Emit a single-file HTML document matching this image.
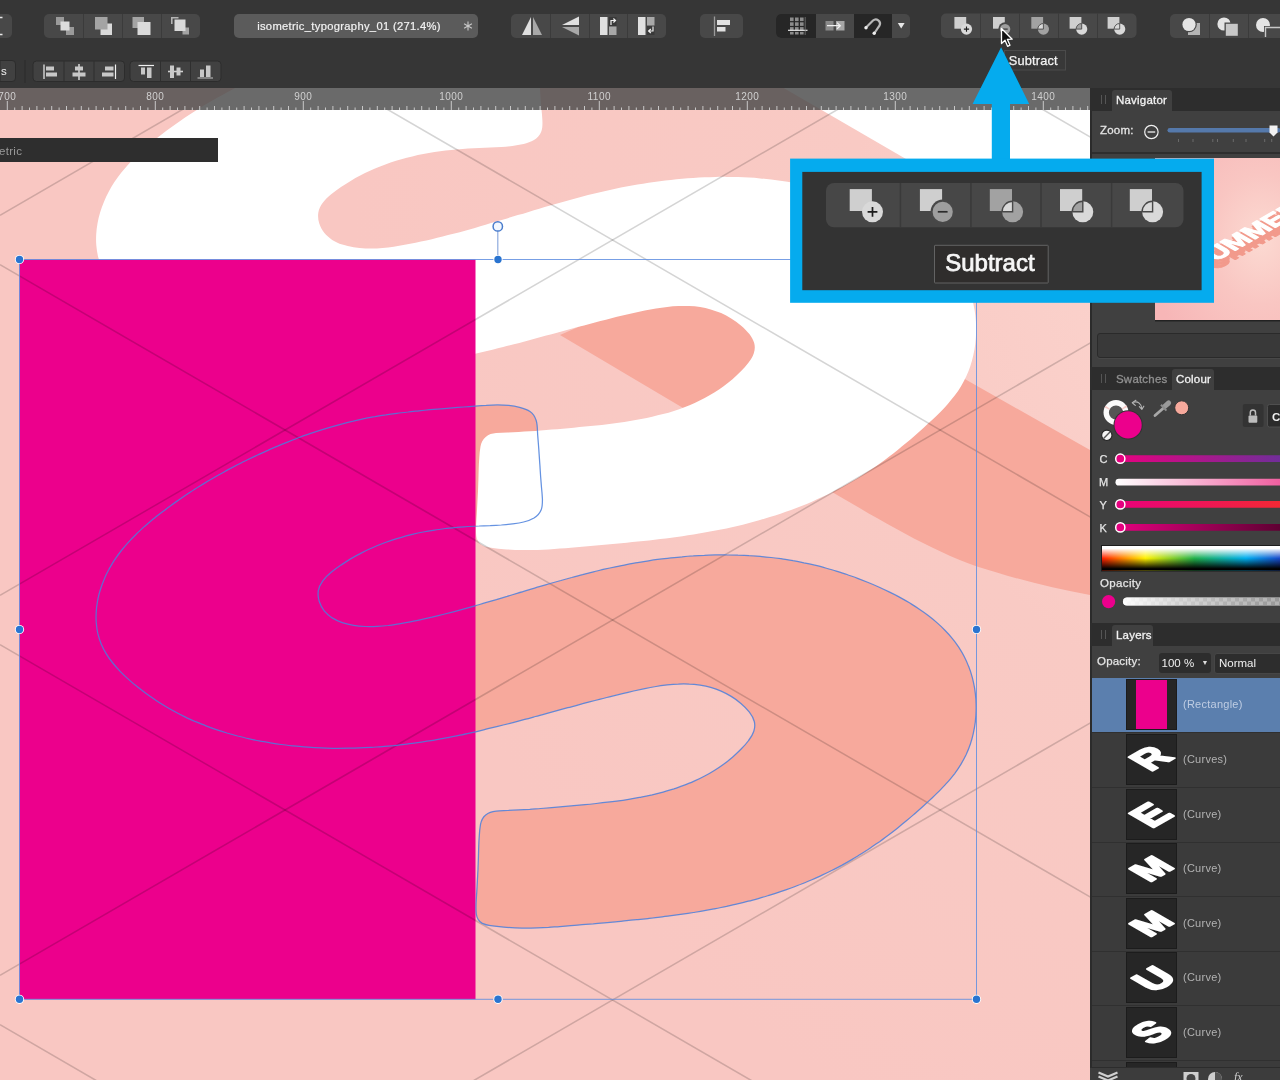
<!DOCTYPE html>
<html><head><meta charset="utf-8"><title>isometric_typography_01</title>
<style>
*{box-sizing:border-box;margin:0;padding:0}
html,body{width:1280px;height:1080px;overflow:hidden;background:#363636;font-family:"Liberation Sans",sans-serif;color:#ddd}
.abs{position:absolute}
body>*{will-change:transform}
#top{position:absolute;left:0;top:0;width:1280px;height:88px;background:#363636}
.canvas{position:absolute;left:0;top:87px}
.canvas text,.ruler text{font-family:"Liberation Sans",sans-serif}
#rulerwrap{position:absolute;left:0;top:88px;width:1090px;height:22px;background:rgba(76,76,76,.83)}
.ruler{position:absolute;left:0;top:0}
.grp{position:absolute;display:flex;border-radius:5px;overflow:hidden;background:#484848}
.grp>div{position:relative;height:100%;border-right:1px solid #3a3a3a}
.grp>div:last-child{border-right:0}
.grp svg{position:absolute;left:0;top:0}
#panel{position:absolute;left:1090px;top:88px;width:190px;height:992px;background:#404040}
.hdr{position:absolute;left:0;width:190px;height:25px;background:#2d2d2d}
.tab{position:absolute;top:0;height:25px;background:#404040;color:#f2f2f2;font-size:11.5px;line-height:25px;padding:0 4px;letter-spacing:.2px}
.grip{position:absolute;left:11px;top:8px;width:5px;height:9px;border-left:1px solid #555;border-right:1px solid #555}
.lbl{position:absolute;font-size:11.5px;color:#e4e4e4;letter-spacing:.2px}
.lrow{position:absolute;left:2px;width:188px;height:54.6px;border-top:1px solid #303030;background:#3b3b3b}
.lrow .th,.lrow .nm{margin-left:-2px}
.lrow .th{position:absolute;left:36px;top:.5px;width:51px;height:51px;background:#262626;border:1px solid #1c1c1c}
.lrow .nm{position:absolute;left:93px;top:19.5px;font-size:11px;color:#b2b2b2;letter-spacing:.25px}
.sl{position:absolute;left:36px;width:160px;height:7px;border-radius:4px;box-shadow:0 1px 0 rgba(255,255,255,.12)}
.knob{position:absolute;width:11px;height:11px;border-radius:50%;border:1.6px solid #fff;background:#e5007f;left:25px}
</style></head><body>

<svg class="canvas" width="1090" height="993" viewBox="0 87 1090 993">
<defs>
<path id="S" d="M474.8 406.1C471.1 406.4 467.3 406.7 463.6 407.0C459.8 407.3 456.1 407.6 452.3 407.9C448.6 408.2 444.9 408.5 441.2 408.8C437.5 409.1 433.8 409.4 430.1 409.7C426.4 410.1 422.7 410.4 419.0 410.8C415.3 411.2 411.6 411.5 408.0 412.0C404.3 412.4 400.6 412.8 397.0 413.3C393.3 413.8 389.7 414.3 386.0 414.9C382.4 415.4 378.7 416.0 375.1 416.7C371.4 417.3 367.8 418.0 364.2 418.7C360.5 419.5 356.9 420.2 353.3 421.1C349.6 421.9 346.0 422.8 342.4 423.8C338.7 424.7 335.1 425.7 331.5 426.8C327.9 427.9 324.3 429.0 320.7 430.1C317.1 431.3 313.5 432.5 309.9 433.7C306.4 434.9 302.8 436.2 299.2 437.5C295.7 438.8 292.2 440.2 288.7 441.6C285.1 443.0 281.6 444.4 278.2 445.9C274.7 447.3 271.2 448.8 267.8 450.4C264.4 451.9 261.0 453.4 257.6 455.0C254.2 456.6 250.8 458.2 247.5 459.8C244.1 461.4 240.8 463.1 237.5 464.8C234.3 466.5 231.0 468.2 227.7 469.9C224.5 471.7 221.3 473.4 218.1 475.3C214.9 477.1 211.7 478.9 208.5 480.8C205.4 482.7 202.2 484.6 199.1 486.5C195.9 488.5 192.8 490.5 189.7 492.5C186.6 494.5 183.5 496.6 180.5 498.7C177.4 500.9 174.3 503.0 171.3 505.2C168.2 507.4 165.2 509.7 162.2 512.0C159.2 514.3 156.2 516.6 153.2 519.0C150.3 521.5 147.4 523.9 144.5 526.4C141.7 529.0 138.9 531.6 136.2 534.2C133.4 536.9 130.8 539.6 128.3 542.4C125.8 545.2 123.3 548.1 121.0 551.0C118.7 554.0 116.5 557.0 114.4 560.1C112.4 563.3 110.4 566.5 108.7 569.8C106.9 573.1 105.3 576.4 103.9 579.9C102.4 583.4 101.2 586.9 100.1 590.5C99.0 594.1 98.1 597.7 97.5 601.4C96.8 605.0 96.4 608.7 96.2 612.4C96.0 616.0 96.0 619.7 96.3 623.3C96.6 626.9 97.1 630.4 97.9 633.9C98.8 637.4 99.9 640.8 101.3 644.2C102.7 647.5 104.4 650.7 106.3 653.9C108.2 657.0 110.4 660.1 112.8 663.0C115.1 666.0 117.7 668.8 120.4 671.6C123.1 674.4 125.9 677.0 128.8 679.6C131.7 682.2 134.6 684.7 137.7 687.1C140.7 689.5 143.7 691.8 146.8 694.1C149.9 696.3 153.0 698.5 156.1 700.5C159.3 702.6 162.5 704.6 165.7 706.5C168.9 708.4 172.2 710.3 175.5 712.0C178.8 713.8 182.1 715.5 185.5 717.1C188.8 718.7 192.2 720.2 195.6 721.7C199.0 723.1 202.4 724.5 205.9 725.8C209.3 727.1 212.8 728.4 216.3 729.6C219.8 730.8 223.3 731.9 226.9 733.0C230.4 734.0 234.0 735.0 237.6 736.0C241.2 736.9 244.8 737.8 248.4 738.6C252.0 739.4 255.6 740.2 259.3 740.9C262.9 741.6 266.6 742.2 270.3 742.8C273.9 743.4 277.6 744.0 281.3 744.5C285.0 745.0 288.7 745.4 292.4 745.8C296.2 746.2 299.9 746.6 303.6 746.9C307.3 747.2 311.1 747.4 314.8 747.6C318.5 747.8 322.3 748.0 326.0 748.1C329.8 748.2 333.5 748.3 337.3 748.3C341.0 748.3 344.8 748.3 348.6 748.2C352.3 748.2 356.1 748.1 359.8 747.9C363.6 747.8 367.3 747.6 371.1 747.4C374.8 747.1 378.6 746.9 382.3 746.6C386.1 746.3 389.8 745.9 393.6 745.6C397.3 745.2 401.0 744.8 404.7 744.3C408.5 743.9 412.2 743.4 415.9 742.9C419.6 742.3 423.3 741.8 427.0 741.2C430.7 740.6 434.3 740.0 438.0 739.3C441.7 738.7 445.3 738.0 449.0 737.3C452.6 736.6 456.2 735.9 459.9 735.1C463.5 734.4 467.1 733.6 470.7 732.8C474.4 732.0 478.0 731.2 481.6 730.3C485.2 729.5 488.8 728.6 492.4 727.7C496.0 726.8 499.6 725.9 503.2 725.0C506.7 724.1 510.3 723.2 513.9 722.3C517.5 721.3 521.1 720.4 524.7 719.4C528.3 718.5 531.8 717.5 535.4 716.5C539.0 715.6 542.6 714.6 546.2 713.6C549.8 712.6 553.4 711.7 557.0 710.7C560.6 709.7 564.2 708.7 567.8 707.7C571.4 706.8 575.0 705.8 578.6 704.8C582.2 703.9 585.9 702.9 589.5 701.9C593.1 701.0 596.8 700.0 600.4 699.1C604.1 698.2 607.8 697.2 611.4 696.3C615.1 695.4 618.8 694.5 622.5 693.6C626.2 692.7 629.9 691.9 633.6 691.0C637.3 690.2 641.0 689.4 644.8 688.6C648.5 687.8 652.2 687.1 656.0 686.5C659.7 685.9 663.4 685.4 667.2 684.9C670.9 684.5 674.6 684.2 678.3 684.1C682.0 683.9 685.6 683.9 689.3 684.1C692.9 684.2 696.5 684.6 700.1 685.1C703.7 685.7 707.2 686.4 710.7 687.4C714.2 688.4 717.7 689.6 721.1 691.1C724.5 692.6 727.9 694.3 731.2 696.4C734.5 698.4 737.8 700.8 740.9 703.4C744.1 706.1 747.0 709.0 749.4 712.1C751.7 715.1 753.5 718.3 754.3 721.5C755.1 724.8 754.9 728.0 753.8 731.2C752.8 734.4 750.9 737.5 748.6 740.5C746.4 743.6 743.7 746.5 740.9 749.3C738.2 752.0 735.4 754.7 732.5 757.2C729.6 759.6 726.7 762.0 723.6 764.2C720.6 766.4 717.5 768.5 714.3 770.5C711.2 772.5 708.0 774.3 704.7 776.0C701.4 777.8 698.1 779.4 694.7 780.9C691.3 782.4 687.9 783.9 684.4 785.2C681.0 786.5 677.4 787.7 673.9 788.9C670.3 790.0 666.8 791.1 663.1 792.1C659.5 793.0 655.9 793.9 652.2 794.8C648.6 795.6 644.9 796.4 641.2 797.1C637.4 797.8 633.7 798.5 630.0 799.1C626.2 799.7 622.5 800.3 618.7 800.8C615.0 801.3 611.2 801.8 607.5 802.2C603.7 802.7 600.0 803.1 596.2 803.5C592.5 803.9 588.7 804.3 585.0 804.6C581.3 805.0 577.6 805.3 573.9 805.7C570.2 806.0 566.5 806.4 562.8 806.7C559.2 807.0 555.5 807.3 551.8 807.6C548.2 807.9 544.5 808.2 540.8 808.5C537.2 808.8 533.5 809.0 529.8 809.3C526.1 809.5 522.4 809.7 518.7 809.9C515.0 810.2 511.2 810.4 507.5 810.5C503.7 810.7 499.9 810.8 496.1 811.1C492.3 811.4 488.6 812.5 485.7 814.9C482.7 817.3 481.2 820.7 480.5 824.4C479.9 828.1 479.5 831.9 479.3 835.6C479.0 839.4 478.8 843.1 478.7 846.8C478.6 850.5 478.5 854.2 478.4 858.0C478.3 861.7 478.1 865.4 478.0 869.2C477.8 872.9 477.6 876.7 477.4 880.4C477.2 884.1 477.0 887.8 476.8 891.6C476.5 895.3 476.3 899.0 476.1 902.7C476.0 906.4 475.8 910.3 476.3 914.0C476.8 917.7 478.8 921.2 481.9 923.1C485.0 924.9 488.9 925.4 492.7 925.9C496.4 926.4 500.2 926.9 503.9 927.2C507.7 927.5 511.4 927.7 515.1 927.9C518.9 928.0 522.6 928.1 526.3 928.1C530.0 928.1 533.8 928.0 537.5 927.9C541.2 927.7 544.9 927.6 548.6 927.4C552.3 927.1 556.0 926.9 559.8 926.6C563.5 926.3 567.2 926.0 570.9 925.7C574.6 925.4 578.3 925.1 582.0 924.7C585.8 924.4 589.5 924.1 593.2 923.8C596.9 923.4 600.6 923.1 604.4 922.8C608.1 922.5 611.8 922.1 615.5 921.8C619.3 921.4 623.0 921.1 626.7 920.7C630.4 920.4 634.1 920.0 637.9 919.6C641.6 919.2 645.3 918.8 649.0 918.4C652.7 918.0 656.4 917.6 660.2 917.1C663.9 916.7 667.6 916.2 671.3 915.7C675.0 915.2 678.7 914.7 682.4 914.2C686.1 913.6 689.8 913.1 693.5 912.5C697.1 911.9 700.8 911.3 704.5 910.6C708.2 910.0 711.8 909.3 715.5 908.6C719.2 907.9 722.8 907.1 726.5 906.4C730.1 905.6 733.7 904.8 737.4 903.9C741.0 903.1 744.6 902.2 748.2 901.2C751.9 900.3 755.5 899.3 759.1 898.3C762.7 897.3 766.2 896.2 769.8 895.1C773.4 894.0 776.9 892.9 780.5 891.7C784.0 890.5 787.6 889.2 791.1 888.0C794.6 886.7 798.1 885.3 801.5 884.0C805.0 882.6 808.5 881.2 811.9 879.7C815.3 878.2 818.7 876.7 822.1 875.1C825.5 873.5 828.8 871.9 832.2 870.2C835.5 868.6 838.8 866.8 842.1 865.1C845.4 863.3 848.6 861.5 851.8 859.6C855.0 857.7 858.2 855.8 861.4 853.8C864.5 851.8 867.6 849.8 870.7 847.7C873.8 845.7 876.8 843.5 879.9 841.4C882.9 839.2 885.9 837.0 888.9 834.7C891.8 832.5 894.8 830.2 897.7 827.9C900.6 825.5 903.5 823.2 906.4 820.8C909.3 818.4 912.2 815.9 915.0 813.5C917.8 811.0 920.6 808.5 923.4 806.0C926.2 803.4 929.0 800.9 931.8 798.3C934.5 795.7 937.2 793.1 939.9 790.4C942.5 787.7 945.1 785.0 947.6 782.2C950.1 779.4 952.4 776.5 954.7 773.6C956.9 770.6 959.0 767.5 960.9 764.4C962.8 761.2 964.6 757.9 966.2 754.6C967.7 751.2 969.1 747.7 970.3 744.2C971.5 740.6 972.5 737.0 973.3 733.3C974.1 729.6 974.8 725.9 975.3 722.1C975.7 718.3 976.0 714.5 976.1 710.8C976.2 707.0 976.1 703.2 975.9 699.4C975.6 695.6 975.2 691.8 974.6 688.1C973.9 684.4 973.2 680.7 972.2 677.1C971.2 673.5 970.1 670.0 968.7 666.6C967.4 663.1 965.9 659.8 964.2 656.5C962.6 653.3 960.7 650.2 958.7 647.1C956.7 644.1 954.5 641.2 952.2 638.4C949.9 635.5 947.5 632.8 944.9 630.2C942.4 627.6 939.7 625.0 936.9 622.6C934.1 620.1 931.2 617.8 928.2 615.5C925.3 613.2 922.2 611.0 919.0 608.9C915.9 606.8 912.6 604.8 909.4 602.8C906.1 600.8 902.7 598.9 899.4 597.1C896.0 595.3 892.5 593.6 889.1 591.9C885.6 590.2 882.2 588.6 878.7 587.0C875.2 585.4 871.7 583.9 868.2 582.5C864.7 581.1 861.2 579.7 857.6 578.3C854.1 577.0 850.6 575.8 847.0 574.5C843.5 573.3 839.9 572.2 836.3 571.1C832.8 570.0 829.2 569.0 825.6 568.0C822.0 567.0 818.4 566.1 814.8 565.2C811.2 564.3 807.6 563.5 803.9 562.8C800.3 562.0 796.7 561.3 793.0 560.7C789.4 560.0 785.8 559.5 782.1 558.9C778.4 558.4 774.8 557.9 771.1 557.5C767.4 557.1 763.7 556.7 760.1 556.4C756.4 556.1 752.7 555.8 749.0 555.6C745.3 555.3 741.6 555.2 737.9 555.1C734.2 554.9 730.4 554.9 726.7 554.9C723.0 554.8 719.3 554.9 715.6 554.9C711.9 555.0 708.1 555.1 704.4 555.3C700.7 555.4 697.0 555.6 693.2 555.9C689.5 556.1 685.8 556.4 682.1 556.8C678.3 557.1 674.6 557.5 670.9 557.9C667.2 558.3 663.5 558.7 659.8 559.2C656.0 559.7 652.3 560.2 648.6 560.8C644.9 561.4 641.2 562.0 637.5 562.6C633.8 563.2 630.1 563.9 626.4 564.6C622.8 565.3 619.1 566.1 615.4 566.8C611.7 567.6 608.1 568.4 604.4 569.2C600.8 570.1 597.1 570.9 593.5 571.8C589.8 572.7 586.2 573.6 582.6 574.6C578.9 575.5 575.3 576.5 571.7 577.5C568.1 578.4 564.5 579.4 560.9 580.5C557.3 581.5 553.7 582.5 550.1 583.5C546.5 584.6 542.9 585.6 539.3 586.7C535.7 587.8 532.1 588.8 528.6 589.9C525.0 591.0 521.4 592.1 517.8 593.1C514.2 594.2 510.7 595.3 507.1 596.4C503.5 597.4 499.9 598.5 496.4 599.6C492.8 600.6 489.2 601.7 485.6 602.7C482.1 603.8 478.5 604.8 474.9 605.9C471.3 606.9 467.8 607.9 464.2 608.9C460.6 609.9 457.0 610.8 453.4 611.8C449.8 612.7 446.2 613.6 442.7 614.5C439.1 615.4 435.5 616.3 431.9 617.2C428.2 618.0 424.6 618.8 421.0 619.6C417.4 620.4 413.8 621.1 410.2 621.8C406.5 622.5 402.9 623.2 399.2 623.8C395.6 624.5 391.9 625.0 388.2 625.5C384.5 625.9 380.8 626.2 377.0 626.4C373.2 626.6 369.3 626.7 365.4 626.5C361.5 626.3 357.5 626.0 353.6 625.3C349.7 624.7 345.9 623.8 342.2 622.6C338.6 621.4 335.2 619.8 332.2 617.9C329.2 615.9 326.5 613.6 324.2 610.8C322.0 608.0 320.3 604.8 319.2 601.3C318.1 597.8 317.8 594.2 318.3 590.7C318.9 587.2 320.5 583.9 322.8 580.8C325.1 577.8 328.0 574.9 331.2 572.3C334.4 569.7 337.8 567.3 341.0 565.1C344.3 562.9 347.4 560.8 350.6 558.9C353.8 557.0 357.0 555.2 360.2 553.6C363.4 551.9 366.6 550.3 370.0 548.8C373.3 547.3 376.7 545.9 380.1 544.5C383.6 543.1 387.1 541.8 390.6 540.6C394.2 539.4 397.8 538.3 401.4 537.3C405.0 536.2 408.6 535.3 412.3 534.4C416.0 533.5 419.6 532.7 423.3 532.0C427.0 531.3 430.7 530.7 434.5 530.1C438.2 529.5 441.9 529.0 445.6 528.5C449.4 528.1 453.1 527.7 456.8 527.4C460.6 527.0 464.3 526.8 468.0 526.5C471.7 526.3 475.5 526.1 479.2 526.0C482.9 525.8 486.5 525.7 490.2 525.6C493.9 525.4 497.6 525.2 501.3 525.0C505.0 524.7 508.7 524.4 512.4 523.9C516.1 523.4 519.9 522.9 523.6 522.0C527.3 521.1 530.9 519.9 534.0 518.0C537.1 516.0 539.9 513.1 541.2 509.7C542.6 506.3 542.5 502.4 542.4 498.6C542.2 494.9 541.9 491.2 541.5 487.5C541.2 483.8 540.9 480.0 540.6 476.3C540.4 472.6 540.1 468.9 539.9 465.1C539.6 461.4 539.4 457.7 539.1 453.9C538.9 450.2 538.6 446.5 538.3 442.8C538.0 439.1 537.7 435.4 537.5 431.6C537.4 427.9 537.3 424.1 536.2 420.5C535.1 416.9 533.0 413.4 530.0 411.4C526.9 409.4 523.2 408.3 519.6 407.3C516.0 406.4 512.4 405.8 508.7 405.4C505.0 405.0 501.2 404.9 497.5 404.9C493.7 404.9 490.0 405.0 486.2 405.3C482.4 405.5 478.6 405.8 474.8 406.1Z"/>
<radialGradient id="bgG" gradientUnits="userSpaceOnUse" cx="1350" cy="230" r="1000"><stop offset="0" stop-color="#fcd8d2"/><stop offset=".5" stop-color="#f9cac4"/><stop offset="1" stop-color="#f9c7c2"/></radialGradient>
</defs>
<rect x="0" y="80" width="1090" height="1000" fill="url(#bgG)"/>
<path d="M963 378 L1090 450 L1090 595 C1050 588 1010 577 977 566.5 C930 550 880 520 832 492 L900 420Z" fill="#f7a99c"/>
<path d="M560 335 L640 300 L780 300 L780 380 L700 418Z" fill="#f7a99c"/>
<path d="M782 87 L1090 87 L1090 160 L907.700 160Z" fill="#fff"/>
<use href="#S" fill="#f7a99c"/>
<use href="#S" fill="#fff" transform="translate(0,-378)"/>
<rect x="19.5" y="259.5" width="456" height="739.8" fill="#ec008c"/>
<clipPath id="cv"><rect x="0" y="110" width="1090" height="970"/></clipPath><g stroke="#000" stroke-opacity=".17" stroke-width="1.6" clip-path="url(#cv)"><line x1="0.0" y1="-495.3" x2="1100.0" y2="142.7"/><line x1="0.0" y1="-115.3" x2="1100.0" y2="522.7"/><line x1="0.0" y1="264.7" x2="1100.0" y2="902.7"/><line x1="0.0" y1="644.7" x2="1100.0" y2="1282.7"/><line x1="0.0" y1="1024.7" x2="1100.0" y2="1662.7"/><line x1="0.0" y1="1404.7" x2="1100.0" y2="2042.7"/><line x1="0.0" y1="215.3" x2="1100.0" y2="-422.7"/><line x1="0.0" y1="595.3" x2="1100.0" y2="-42.7"/><line x1="0.0" y1="975.3" x2="1100.0" y2="337.3"/><line x1="0.0" y1="1355.3" x2="1100.0" y2="717.3"/><line x1="0.0" y1="1735.3" x2="1100.0" y2="1097.3"/><line x1="0.0" y1="2115.3" x2="1100.0" y2="1477.3"/></g>
<use href="#S" fill="none" stroke="#4a7fdc" stroke-width="1.25" stroke-opacity=".85"/>
<rect x="19.5" y="259.5" width="957" height="739.8" fill="none" stroke="#5f8ee0" stroke-opacity=".85" stroke-width="1"/>
<line x1="497.8" y1="231" x2="497.8" y2="259" stroke="#8eaade" stroke-width="1.2"/>
<circle cx="497.8" cy="226.4" r="4.7" fill="#f2f8ff" stroke="#4a7ccc" stroke-width="1.5"/>
<circle cx="19.5" cy="259.5" r="4.6" fill="#fff"/><circle cx="19.5" cy="259.5" r="3.7" fill="#2a74d0"/><circle cx="498.0" cy="259.5" r="4.6" fill="#fff"/><circle cx="498.0" cy="259.5" r="3.7" fill="#2a74d0"/><circle cx="19.5" cy="629.5" r="4.6" fill="#fff"/><circle cx="19.5" cy="629.5" r="3.7" fill="#2a74d0"/><circle cx="976.5" cy="629.5" r="4.6" fill="#fff"/><circle cx="976.5" cy="629.5" r="3.7" fill="#2a74d0"/><circle cx="19.5" cy="999.3" r="4.6" fill="#fff"/><circle cx="19.5" cy="999.3" r="3.7" fill="#2a74d0"/><circle cx="498.0" cy="999.3" r="4.6" fill="#fff"/><circle cx="498.0" cy="999.3" r="3.7" fill="#2a74d0"/><circle cx="976.5" cy="999.3" r="4.6" fill="#fff"/><circle cx="976.5" cy="999.3" r="3.7" fill="#2a74d0"/>
<rect x="0" y="138" width="218" height="24" fill="#2e2e2e"/>
<text x="-1" y="154.5" font-size="11.5" fill="#9a9a9a" letter-spacing=".3">etric</text>
</svg>

<div id="rulerwrap"><svg class="ruler" width="1090" height="22" viewBox="0 0 1090 22"><g fill="#d8d8d8" opacity=".85"><rect x="6.8" y="13.0" width="1" height="9.0"/><rect x="14.2" y="19.5" width="1" height="2.5"/><rect x="21.6" y="18.0" width="1" height="4.0"/><rect x="29.0" y="19.5" width="1" height="2.5"/><rect x="36.4" y="18.0" width="1" height="4.0"/><rect x="43.8" y="19.5" width="1" height="2.5"/><rect x="51.2" y="18.0" width="1" height="4.0"/><rect x="58.6" y="19.5" width="1" height="2.5"/><rect x="66.0" y="18.0" width="1" height="4.0"/><rect x="73.4" y="19.5" width="1" height="2.5"/><rect x="80.8" y="18.0" width="1" height="4.0"/><rect x="88.2" y="19.5" width="1" height="2.5"/><rect x="95.6" y="18.0" width="1" height="4.0"/><rect x="103.0" y="19.5" width="1" height="2.5"/><rect x="110.4" y="18.0" width="1" height="4.0"/><rect x="117.8" y="19.5" width="1" height="2.5"/><rect x="125.2" y="18.0" width="1" height="4.0"/><rect x="132.6" y="19.5" width="1" height="2.5"/><rect x="140.0" y="18.0" width="1" height="4.0"/><rect x="147.4" y="19.5" width="1" height="2.5"/><rect x="154.8" y="13.0" width="1" height="9.0"/><rect x="162.2" y="19.5" width="1" height="2.5"/><rect x="169.6" y="18.0" width="1" height="4.0"/><rect x="177.0" y="19.5" width="1" height="2.5"/><rect x="184.4" y="18.0" width="1" height="4.0"/><rect x="191.8" y="19.5" width="1" height="2.5"/><rect x="199.2" y="18.0" width="1" height="4.0"/><rect x="206.6" y="19.5" width="1" height="2.5"/><rect x="214.0" y="18.0" width="1" height="4.0"/><rect x="221.4" y="19.5" width="1" height="2.5"/><rect x="228.8" y="18.0" width="1" height="4.0"/><rect x="236.2" y="19.5" width="1" height="2.5"/><rect x="243.6" y="18.0" width="1" height="4.0"/><rect x="251.0" y="19.5" width="1" height="2.5"/><rect x="258.4" y="18.0" width="1" height="4.0"/><rect x="265.8" y="19.5" width="1" height="2.5"/><rect x="273.2" y="18.0" width="1" height="4.0"/><rect x="280.6" y="19.5" width="1" height="2.5"/><rect x="288.0" y="18.0" width="1" height="4.0"/><rect x="295.4" y="19.5" width="1" height="2.5"/><rect x="302.8" y="13.0" width="1" height="9.0"/><rect x="310.2" y="19.5" width="1" height="2.5"/><rect x="317.6" y="18.0" width="1" height="4.0"/><rect x="325.0" y="19.5" width="1" height="2.5"/><rect x="332.4" y="18.0" width="1" height="4.0"/><rect x="339.8" y="19.5" width="1" height="2.5"/><rect x="347.2" y="18.0" width="1" height="4.0"/><rect x="354.6" y="19.5" width="1" height="2.5"/><rect x="362.0" y="18.0" width="1" height="4.0"/><rect x="369.4" y="19.5" width="1" height="2.5"/><rect x="376.8" y="18.0" width="1" height="4.0"/><rect x="384.2" y="19.5" width="1" height="2.5"/><rect x="391.6" y="18.0" width="1" height="4.0"/><rect x="399.0" y="19.5" width="1" height="2.5"/><rect x="406.4" y="18.0" width="1" height="4.0"/><rect x="413.8" y="19.5" width="1" height="2.5"/><rect x="421.2" y="18.0" width="1" height="4.0"/><rect x="428.6" y="19.5" width="1" height="2.5"/><rect x="436.0" y="18.0" width="1" height="4.0"/><rect x="443.4" y="19.5" width="1" height="2.5"/><rect x="450.8" y="13.0" width="1" height="9.0"/><rect x="458.2" y="19.5" width="1" height="2.5"/><rect x="465.6" y="18.0" width="1" height="4.0"/><rect x="473.0" y="19.5" width="1" height="2.5"/><rect x="480.4" y="18.0" width="1" height="4.0"/><rect x="487.8" y="19.5" width="1" height="2.5"/><rect x="495.2" y="18.0" width="1" height="4.0"/><rect x="502.6" y="19.5" width="1" height="2.5"/><rect x="510.0" y="18.0" width="1" height="4.0"/><rect x="517.4" y="19.5" width="1" height="2.5"/><rect x="524.8" y="18.0" width="1" height="4.0"/><rect x="532.2" y="19.5" width="1" height="2.5"/><rect x="539.6" y="18.0" width="1" height="4.0"/><rect x="547.0" y="19.5" width="1" height="2.5"/><rect x="554.4" y="18.0" width="1" height="4.0"/><rect x="561.8" y="19.5" width="1" height="2.5"/><rect x="569.2" y="18.0" width="1" height="4.0"/><rect x="576.6" y="19.5" width="1" height="2.5"/><rect x="584.0" y="18.0" width="1" height="4.0"/><rect x="591.4" y="19.5" width="1" height="2.5"/><rect x="598.8" y="13.0" width="1" height="9.0"/><rect x="606.2" y="19.5" width="1" height="2.5"/><rect x="613.6" y="18.0" width="1" height="4.0"/><rect x="621.0" y="19.5" width="1" height="2.5"/><rect x="628.4" y="18.0" width="1" height="4.0"/><rect x="635.8" y="19.5" width="1" height="2.5"/><rect x="643.2" y="18.0" width="1" height="4.0"/><rect x="650.6" y="19.5" width="1" height="2.5"/><rect x="658.0" y="18.0" width="1" height="4.0"/><rect x="665.4" y="19.5" width="1" height="2.5"/><rect x="672.8" y="18.0" width="1" height="4.0"/><rect x="680.2" y="19.5" width="1" height="2.5"/><rect x="687.6" y="18.0" width="1" height="4.0"/><rect x="695.0" y="19.5" width="1" height="2.5"/><rect x="702.4" y="18.0" width="1" height="4.0"/><rect x="709.8" y="19.5" width="1" height="2.5"/><rect x="717.2" y="18.0" width="1" height="4.0"/><rect x="724.6" y="19.5" width="1" height="2.5"/><rect x="732.0" y="18.0" width="1" height="4.0"/><rect x="739.4" y="19.5" width="1" height="2.5"/><rect x="746.8" y="13.0" width="1" height="9.0"/><rect x="754.2" y="19.5" width="1" height="2.5"/><rect x="761.6" y="18.0" width="1" height="4.0"/><rect x="769.0" y="19.5" width="1" height="2.5"/><rect x="776.4" y="18.0" width="1" height="4.0"/><rect x="783.8" y="19.5" width="1" height="2.5"/><rect x="791.2" y="18.0" width="1" height="4.0"/><rect x="798.6" y="19.5" width="1" height="2.5"/><rect x="806.0" y="18.0" width="1" height="4.0"/><rect x="813.4" y="19.5" width="1" height="2.5"/><rect x="820.8" y="18.0" width="1" height="4.0"/><rect x="828.2" y="19.5" width="1" height="2.5"/><rect x="835.6" y="18.0" width="1" height="4.0"/><rect x="843.0" y="19.5" width="1" height="2.5"/><rect x="850.4" y="18.0" width="1" height="4.0"/><rect x="857.8" y="19.5" width="1" height="2.5"/><rect x="865.2" y="18.0" width="1" height="4.0"/><rect x="872.6" y="19.5" width="1" height="2.5"/><rect x="880.0" y="18.0" width="1" height="4.0"/><rect x="887.4" y="19.5" width="1" height="2.5"/><rect x="894.8" y="13.0" width="1" height="9.0"/><rect x="902.2" y="19.5" width="1" height="2.5"/><rect x="909.6" y="18.0" width="1" height="4.0"/><rect x="917.0" y="19.5" width="1" height="2.5"/><rect x="924.4" y="18.0" width="1" height="4.0"/><rect x="931.8" y="19.5" width="1" height="2.5"/><rect x="939.2" y="18.0" width="1" height="4.0"/><rect x="946.6" y="19.5" width="1" height="2.5"/><rect x="954.0" y="18.0" width="1" height="4.0"/><rect x="961.4" y="19.5" width="1" height="2.5"/><rect x="968.8" y="18.0" width="1" height="4.0"/><rect x="976.2" y="19.5" width="1" height="2.5"/><rect x="983.6" y="18.0" width="1" height="4.0"/><rect x="991.0" y="19.5" width="1" height="2.5"/><rect x="998.4" y="18.0" width="1" height="4.0"/><rect x="1005.8" y="19.5" width="1" height="2.5"/><rect x="1013.2" y="18.0" width="1" height="4.0"/><rect x="1020.6" y="19.5" width="1" height="2.5"/><rect x="1028.0" y="18.0" width="1" height="4.0"/><rect x="1035.4" y="19.5" width="1" height="2.5"/><rect x="1042.8" y="13.0" width="1" height="9.0"/><rect x="1050.2" y="19.5" width="1" height="2.5"/><rect x="1057.6" y="18.0" width="1" height="4.0"/><rect x="1065.0" y="19.5" width="1" height="2.5"/><rect x="1072.4" y="18.0" width="1" height="4.0"/><rect x="1079.8" y="19.5" width="1" height="2.5"/><rect x="1087.2" y="18.0" width="1" height="4.0"/></g><g fill="#d0d0d0" font-size="10" text-anchor="middle" letter-spacing=".5"><text x="-140.7" y="12">600</text><text x="7.3" y="12">700</text><text x="155.3" y="12">800</text><text x="303.3" y="12">900</text><text x="451.3" y="12">1000</text><text x="599.3" y="12">1100</text><text x="747.3" y="12">1200</text><text x="895.3" y="12">1300</text><text x="1043.3" y="12">1400</text><text x="1191.3" y="12">1500</text></g></svg></div>
<div id="top">
<svg class="abs" style="left:0;top:0" width="1280" height="88" viewBox="0 0 1280 88">
<defs>
<clipPath id="cg1"><rect x="44" y="14" width="156" height="24" rx="5"/></clipPath>
</defs>
<!-- left partial -->
<path d="M0 14H7a5 5 0 0 1 5 5V33a5 5 0 0 1-5 5H0Z" fill="#484848"/>
<path d="M0 17.5H2.5M0 34.5H2.5" stroke="#e8e8e8" stroke-width="1.6" fill="none"/>
<!-- group1 arrange -->
<rect x="44" y="14" width="156" height="24" rx="5" fill="#484848"/>
<g stroke="#3b3b3b" stroke-width="1"><path d="M83.5 14V38M122.5 14V38M161.5 14V38"/></g>
<g>
<rect x="56" y="17" width="8" height="8" fill="#9a9a9a"/><rect x="66" y="27" width="8" height="8" fill="#9a9a9a"/><rect x="60.5" y="21.5" width="9" height="9" fill="#dcdcdc"/>
<rect x="100.5" y="23.5" width="11.5" height="11.5" fill="#dadada"/><rect x="95" y="17" width="12.5" height="12.5" fill="#a4a4a4"/>
<rect x="132.5" y="17" width="11.5" height="11" fill="#a4a4a4"/><rect x="137.5" y="22" width="13" height="13" fill="#dadada"/>
<path d="M171.800 24V17.800H178.500" stroke="#b4b4b4" stroke-width="1.600" fill="none"/><rect x="182.500" y="27.500" width="6.500" height="7" fill="#a4a4a4"/><rect x="174.500" y="19.500" width="11" height="11.500" fill="#dadada"/>
</g>
<!-- title pill -->
<rect x="234" y="14" width="244" height="24" rx="5" fill="#5b5b5b"/>
<text x="349" y="30" font-size="11.2" fill="#f2f2f2" stroke="#f2f2f2" stroke-width=".2" text-anchor="middle" letter-spacing=".32" font-family="Liberation Sans, sans-serif">isometric_typography_01 (271.4%)</text>
<path d="M468 21.5V30.5M464.1 23.8L471.9 28.2M464.1 28.2L471.9 23.8" stroke="#c8c8c8" stroke-width="1.1"/>
<!-- group2 flip/rotate -->
<rect x="511" y="14" width="155" height="24" rx="5" fill="#484848"/>
<g stroke="#3b3b3b" stroke-width="1"><path d="M550.5 14V38M589.5 14V38M627.5 14V38"/></g>
<path d="M531 17L531 35L522 35Z" fill="#e0e0e0"/><path d="M533 17L533 35L542 35Z" fill="#a8a8a8"/>
<path d="M579 16.5L579 25L562 25Z" fill="#e0e0e0"/><path d="M579 27L579 35.5L562 27Z" fill="#a8a8a8"/>
<rect x="600" y="17" width="7.5" height="18" fill="#e0e0e0"/><rect x="609" y="26.5" width="7.5" height="8.5" fill="#a8a8a8"/><rect x="609" y="17" width="7.5" height="9" fill="#393939"/><path d="M611 25V20.5H615M613.4 18.5L615.5 20.5L613.4 22.5" stroke="#f0f0f0" stroke-width="1.2" fill="none"/>
<rect x="638" y="17" width="7.5" height="18" fill="#e0e0e0"/><rect x="647" y="17" width="7.5" height="8.5" fill="#a8a8a8"/><rect x="647" y="26" width="7.5" height="9" fill="#393939"/><path d="M653 26.500V31H649M650.800 29L648.600 31L650.800 33" stroke="#f0f0f0" stroke-width="1.2" fill="none"/>
<!-- group3 -->
<rect x="700" y="14" width="43" height="24" rx="5" fill="#484848"/>
<path d="M714.5 16.5V36" stroke="#9a9a9a" stroke-width="1.3"/><rect x="717" y="20" width="13" height="5" fill="#e0e0e0"/><rect x="717" y="27" width="8.5" height="4.5" fill="#e0e0e0"/>
<!-- group4 snapping -->
<rect x="776" y="14" width="134" height="24" rx="5" fill="#484848"/>
<path d="M781 14H816V38H781a5 5 0 0 1-5-5V19a5 5 0 0 1 5-5Z" fill="#262626"/>
<rect x="854" y="14" width="38" height="24" fill="#262626"/>
<g fill="#8c8c8c"><rect x="790" y="17.5" width="3.6" height="3.6"/><rect x="795" y="17.5" width="3.6" height="3.6"/><rect x="800" y="17.5" width="3.6" height="3.6"/><rect x="790" y="22.3" width="3.6" height="3.6"/><rect x="795" y="22.3" width="3.6" height="3.6"/><rect x="800" y="22.3" width="3.6" height="3.6"/><rect x="790" y="27.1" width="3.6" height="3.6"/><rect x="795" y="27.1" width="3.6" height="3.6"/><rect x="800" y="27.1" width="3.6" height="3.6"/><rect x="790" y="31.9" width="3.6" height="2.6"/><rect x="795" y="31.9" width="3.6" height="2.6"/><rect x="800" y="31.9" width="3.6" height="2.6"/></g>
<path d="M788 30.3H807.5" stroke="#e6e6e6" stroke-width="1.2"/><path d="M805.2 17V35" stroke="#777" stroke-width=".8"/>
<rect x="825.5" y="21" width="8" height="9.5" fill="#8a8a8a"/><rect x="836" y="21" width="8.5" height="9.5" fill="#a6a6a6"/><path d="M827 25.7H840M837 22.6L840.4 25.7L837 28.8" stroke="#f0f0f0" stroke-width="1.2" fill="none"/>
<path d="M866 27.5L873 20.5a4.2 4.2 0 0 1 6.6 4.9L874.5 33" stroke="#b8b8b8" stroke-width="2.2" fill="none" stroke-linecap="round"/><circle cx="866" cy="27.8" r="1.7" fill="#eee"/><circle cx="874.2" cy="33.3" r="1.7" fill="#eee"/>
<path d="M897.8 23L904.6 23L901.2 28.6Z" fill="#e8e8e8"/>
<!-- group5 boolean -->
<rect x="941" y="13.5" width="195.5" height="24.5" rx="5" fill="#484848"/>
<g stroke="#3b3b3b" stroke-width="1"><path d="M980.5 13.5V38M1019.5 13.5V38M1058.5 13.5V38M1097.5 13.5V38"/></g>
<rect x="954.4" y="17" width="11.8" height="11.7" fill="#cfcfcf"/><circle cx="966.4999999999999" cy="29.099999999999998" r="5.6" fill="#d9d9d9"/><path d="M963.9 29.099999999999998H969.1M966.4999999999999 26.5V31.7" stroke="#1c1c1c" stroke-width="1.1"/><rect x="993" y="17" width="11.8" height="11.7" fill="#cfcfcf"/><circle cx="1005.0999999999999" cy="29.099999999999998" r="6.8" fill="#484848"/><circle cx="1005.0999999999999" cy="29.099999999999998" r="5.2" fill="#9e9e9e"/><path d="M1002.5 29.099999999999998H1007.7" stroke="#2c2c2c" stroke-width="1.1"/><rect x="1031.3" y="17" width="11.8" height="11.7" fill="#a2a2a2"/><circle cx="1043.3999999999999" cy="29.099999999999998" r="5.6" fill="#a2a2a2"/><path d="M1037.8 29.099999999999998A5.6 5.6 0 0 1 1043.3999999999999 23.5V29.099999999999998Z" fill="#d9d9d9" stroke="#484848" stroke-width="0.9" stroke-linejoin="miter"/><rect x="1069.6" y="17" width="11.8" height="11.7" fill="#cfcfcf"/><circle cx="1081.6999999999998" cy="29.099999999999998" r="5.6" fill="#d9d9d9"/><path d="M1076.1 29.099999999999998A5.6 5.6 0 0 1 1081.6999999999998 23.5V29.099999999999998Z" fill="#a2a2a2" stroke="#484848" stroke-width="0.9" stroke-linejoin="miter"/><rect x="1107.6" y="17" width="11.8" height="11.7" fill="#cfcfcf"/><circle cx="1119.6999999999998" cy="29.099999999999998" r="5.6" fill="#d9d9d9"/><path d="M1114.1 29.099999999999998A5.6 5.6 0 0 1 1119.6999999999998 23.5V29.099999999999998Z" fill="#d9d9d9" stroke="#484848" stroke-width="0.9" stroke-linejoin="miter"/>
<!-- group6 -->
<path d="M1175 14H1280V38H1175a5 5 0 0 1-5-5V19a5 5 0 0 1 5-5Z" fill="#484848"/>
<g stroke="#3b3b3b" stroke-width="1"><path d="M1209.5 14V38M1248.5 14V38"/></g>
<rect x="1188" y="23" width="12" height="12" fill="#b4b4b4"/><circle cx="1189" cy="24.5" r="7.8" fill="#484848"/><circle cx="1189" cy="24.5" r="6.6" fill="#e4e4e4"/>
<circle cx="1224" cy="24" r="6.6" fill="#e4e4e4"/><rect x="1224.5" y="22.5" width="13.5" height="13.5" fill="#484848"/><rect x="1225.8" y="23.8" width="12" height="12" fill="#c8c8c8"/>
<circle cx="1263" cy="25" r="7" fill="#e4e4e4"/><rect x="1264" y="26" width="14" height="11" fill="#484848"/><path d="M1265.5 37V27.5H1280" stroke="#c8c8c8" stroke-width="1.4" fill="none"/>
<!-- row 2 -->
<path d="M0 60.5H12a3.5 3.5 0 0 1 3.500 3.500V78a3.500 3.500 0 0 1-3.500 3.500H0Z" fill="#414141" stroke="#2c2c2c"/>
<text x="1" y="75" font-size="11.5" fill="#f2f2f2" font-family="Liberation Sans, sans-serif">s</text>
<path d="M25 60V83" stroke="#2b2b2b" stroke-width="1"/>
<rect x="33" y="61" width="91.500" height="20.500" rx="3.5" fill="#414141" stroke="#2c2c2c"/>
<rect x="130" y="61" width="91" height="20.500" rx="3.5" fill="#414141" stroke="#2c2c2c"/>
<g stroke="#2f2f2f" stroke-width="1"><path d="M64 61V81.500M94 61V81.500M160.500 61V81.500M190.500 61V81.500"/></g>
<path d="M44 64.500V79" stroke="#f0f0f0" stroke-width="1.2"/><rect x="46" y="66.500" width="8" height="4" fill="#c8c8c8"/><rect x="46" y="72.500" width="11" height="4" fill="#c8c8c8"/>
<path d="M79 64V80" stroke="#d0d0d0" stroke-width="1.6"/><rect x="75" y="66.500" width="8" height="4" fill="#c8c8c8"/><rect x="72.500" y="72.500" width="13" height="4" fill="#c8c8c8"/>
<path d="M115.500 64.500V79" stroke="#f0f0f0" stroke-width="1.200"/><rect x="105" y="66.500" width="8.500" height="4" fill="#c8c8c8"/><rect x="102" y="72.500" width="11.500" height="4" fill="#c8c8c8"/>
<path d="M138.500 65.500H154" stroke="#f0f0f0" stroke-width="1.200"/><rect x="141" y="67.500" width="4" height="7" fill="#c8c8c8"/><rect x="147" y="67.500" width="4.500" height="10.500" fill="#c8c8c8"/>
<path d="M168 71.500H183" stroke="#d0d0d0" stroke-width="1.6"/><rect x="170" y="65.500" width="4" height="12.500" fill="#c8c8c8"/><rect x="176.500" y="67.500" width="4" height="8" fill="#c8c8c8"/>
<path d="M197.500 78H213" stroke="#b0b0b0" stroke-width="1.200"/><rect x="200" y="69.500" width="4" height="7.500" fill="#c8c8c8"/><rect x="206" y="65.500" width="4.500" height="11.500" fill="#c8c8c8"/>
</svg>

</div>
<div id="panel">
<div class="abs" style="left:0;top:0;width:2px;height:992px;background:#2b2b2b"></div>
<!-- Navigator -->
<div class="hdr" style="top:0;height:23px"><div class="grip" style="top:7px"></div><div class="tab" style="left:22px;top:2px;height:21px;line-height:20px;width:60px;border-radius:3px 3px 0 0;font-size:11.5px;-webkit-text-stroke:.3px">Navigator</div></div>
<div class="lbl" style="left:10px;top:36px;-webkit-text-stroke:.3px">Zoom:</div>
<svg class="abs" style="left:50px;top:30px" width="140" height="30" viewBox="1140 118 140 30">
<circle cx="1151.4" cy="132" r="6.7" fill="none" stroke="#f0f0f0" stroke-width="1.2"/><path d="M1147.6 132H1155.2" stroke="#f0f0f0" stroke-width="1.3"/>
<rect x="1167.500" y="127.900" width="113" height="4.600" rx="2.3" fill="#5579ab"/>
<path d="M1269.500 125.500H1277.500V132.500L1273.500 136.500L1269.500 132.500Z" fill="#f2f2f2"/>
<g stroke="#6a6a6a" stroke-width="1"><path d="M1178.500 139V142M1193 139V142M1212.800 139V142M1217.500 139V142M1233.300 139V142M1246 139V142M1264.700 139V142M1271.700 139V142"/></g>
</svg>
<div class="abs" style="left:2px;top:64px;width:188px;height:2px;background:#2e2e2e"></div>
<!-- nav preview -->
<svg class="abs" style="left:65px;top:70px" width="125" height="165" viewBox="1155 158 125 165">
<defs><radialGradient id="ng" cx="0.85" cy="0.5" r="0.9"><stop offset="0" stop-color="#fcdad2"/><stop offset=".45" stop-color="#f9c6c2"/><stop offset="1" stop-color="#f7b6b7"/></radialGradient></defs>
<rect x="1155" y="158" width="125" height="163.500" fill="#222"/>
<rect x="1155" y="158" width="125" height="162" fill="url(#ng)"/>
<g font-family="Liberation Sans, sans-serif" font-weight="bold" font-size="24.5" stroke-width="1.2" stroke-linejoin="round">
<text transform="matrix(.979 -.565 .9 .52 1200.5 279.8)" fill="#f29a8c" stroke="#f29a8c">SUMMER</text>
<text transform="matrix(.979 -.565 .9 .52 1200.5 276.8)" fill="#f29a8c" stroke="#f29a8c">SUMMER</text>
<text transform="matrix(.979 -.565 .9 .52 1200.5 273.8)" fill="#f29a8c" stroke="#f29a8c">SUMMER</text>
<text transform="matrix(.979 -.565 .9 .52 1200.5 270.8)" fill="#fff" stroke="#fff">SUMMER</text>
</g>
</svg>
<div class="abs" style="left:7px;top:245px;width:190px;height:25px;background:#393939;border:1px solid #2a2a2a;border-radius:3px;box-shadow:0 1px 0 #484848"></div>
<!-- Swatches / Colour -->
<div class="hdr" style="top:279px;height:23px"><div class="grip" style="top:7px"></div>
<div class="tab" style="left:22px;top:2px;height:21px;line-height:20px;background:none;color:#909090;font-size:11.5px;-webkit-text-stroke:.3px">Swatches</div>
<div class="tab" style="left:82px;top:2px;height:21px;line-height:20px;width:42px;border-radius:3px 3px 0 0;font-size:11.5px;-webkit-text-stroke:.3px">Colour</div></div>
<svg class="abs" style="left:0;top:302px" width="190" height="232" viewBox="1090 390 190 232">
<defs>
<linearGradient id="gC"><stop offset="0" stop-color="#e8007f"/><stop offset="1" stop-color="#6d2f9a"/></linearGradient>
<linearGradient id="gM"><stop offset="0" stop-color="#ffffff"/><stop offset="1" stop-color="#ef5a9d"/></linearGradient>
<linearGradient id="gY"><stop offset="0" stop-color="#e9007c"/><stop offset="1" stop-color="#f32a32"/></linearGradient>
<linearGradient id="gK"><stop offset="0" stop-color="#e5007f"/><stop offset="1" stop-color="#5a0030"/></linearGradient>
<linearGradient id="hue" x1="1101" x2="1335" gradientUnits="userSpaceOnUse"><stop offset="0" stop-color="#ff1a00"/><stop offset=".19" stop-color="#fff200"/><stop offset=".4" stop-color="#22b14c"/><stop offset=".62" stop-color="#00aeef"/><stop offset=".8" stop-color="#2030c0"/><stop offset="1" stop-color="#f0f"/></linearGradient>
<linearGradient id="wb" x1="0" y1="0" x2="0" y2="1"><stop offset="0" stop-color="#fff"/><stop offset=".1" stop-color="#fff"/><stop offset=".5" stop-color="#fff" stop-opacity="0"/><stop offset=".5" stop-color="#000" stop-opacity="0"/><stop offset=".93" stop-color="#000"/><stop offset="1" stop-color="#000"/></linearGradient>
<pattern id="chk" x="1123" y="597.500" width="8" height="8" patternUnits="userSpaceOnUse"><rect width="8" height="8" fill="#fff"/><rect width="4" height="4" fill="#b8b8b8"/><rect x="4" y="4" width="4" height="4" fill="#b8b8b8"/></pattern>
<linearGradient id="og" x1="1123" x2="1300" gradientUnits="userSpaceOnUse"><stop offset="0" stop-color="#fff" stop-opacity=".95"/><stop offset="1" stop-color="#777" stop-opacity=".6"/></linearGradient>
</defs>
<!-- stroke ring + fill -->
<circle cx="1116" cy="412.500" r="7.500" fill="#555"/>
<circle cx="1116" cy="412.500" r="9.800" fill="none" stroke="#fafafa" stroke-width="5.400"/>
<circle cx="1116" cy="412.500" r="9.800" fill="none" stroke="#f6c9c6" stroke-width="5.400" stroke-dasharray="1.600 19" stroke-dashoffset="-14"/>
<circle cx="1128.100" cy="424.900" r="14.600" fill="#333"/>
<circle cx="1128.100" cy="424.900" r="13.600" fill="#ec008c"/>
<circle cx="1106.800" cy="435.300" r="5.200" fill="#f4f4f4" stroke="#262626" stroke-width="1.200"/><path d="M1103.600 438.500L1110 432.100" stroke="#555" stroke-width="1.400"/>
<path d="M1133.300 402.300C1137.800 400.700 1141.500 404 1141.800 408.500" stroke="#b4b4b4" stroke-width="1.200" fill="none"/><path d="M1132.300 402.700L1135.900 400.300M1132.300 402.700L1135.300 405.400M1141.900 409.300L1139.400 406.600M1141.900 409.300L1143.800 406.200" stroke="#b4b4b4" stroke-width="1.200" fill="none" stroke-linecap="round"/>
<path d="M1155 415.500L1163 408.500" stroke="#a8a8a8" stroke-width="2.800" stroke-linecap="round"/><path d="M1164.500 406.600L1168.600 403" stroke="#9a9a9a" stroke-width="5" stroke-linecap="round"/><path d="M1161 404.800L1166.400 410.600" stroke="#8e8e8e" stroke-width="2"/>
<circle cx="1181.700" cy="407.800" r="7" fill="#f7a99c" stroke="#333" stroke-width="1"/>
<rect x="1242.800" y="404" width="20.800" height="23" rx="2" fill="#333"/>
<rect x="1248.500" y="415.500" width="8.800" height="7.300" rx="1" fill="#bdbdbd"/><path d="M1250.300 415.500V412.500a2.600 2.600 0 0 1 5.200 0V415.500" stroke="#bdbdbd" stroke-width="1.500" fill="none"/>
<rect x="1267.500" y="404.500" width="20" height="22.500" rx="2" fill="#2b2b2b" stroke="#4f4f4f"/>
<text x="1272" y="420.500" font-size="11.500" font-weight="bold" fill="#f0f0f0" font-family="Liberation Sans, sans-serif">C</text>
<g font-size="11" fill="#e6e6e6" stroke="#e6e6e6" stroke-width=".25" font-family="Liberation Sans, sans-serif"><text x="1099.500" y="462.500">C</text><text x="1099" y="486">M</text><text x="1099.500" y="508.500">Y</text><text x="1099.500" y="531.500">K</text></g>
<rect x="1115.500" y="455.300" width="170" height="6.800" rx="3.400" fill="url(#gC)"/>
<rect x="1115.500" y="478.800" width="170" height="6.800" rx="3.400" fill="url(#gM)"/>
<rect x="1115.500" y="501" width="170" height="6.800" rx="3.400" fill="url(#gY)"/>
<rect x="1115.500" y="524" width="170" height="6.800" rx="3.400" fill="url(#gK)"/>
<g fill="#e5007f" stroke="#fff" stroke-width="1.500"><circle cx="1120.300" cy="458.700" r="4.600"/><circle cx="1120.300" cy="504.400" r="4.600"/><circle cx="1120.300" cy="527.400" r="4.600"/></g>
<rect x="1101" y="545" width="185" height="26.500" fill="#1d1d1d"/>
<rect x="1102" y="546" width="185" height="24.500" fill="url(#hue)"/><rect x="1102" y="546" width="185" height="24.500" fill="url(#wb)"/>
<text x="1100" y="587" font-size="11.500" fill="#e6e6e6" stroke="#e6e6e6" stroke-width=".25" font-family="Liberation Sans, sans-serif" letter-spacing=".35">Opacity</text>
<circle cx="1108.600" cy="601.700" r="6.600" fill="#ec008c"/>
<rect x="1123" y="597.500" width="170" height="8" rx="4" fill="url(#chk)"/><rect x="1123" y="597.500" width="170" height="8" rx="4" fill="url(#og)"/>
</svg>
<!-- Layers -->
<div class="hdr" style="top:535px;height:23px"><div class="grip" style="top:7px"></div><div class="tab" style="left:22px;top:2px;height:21px;line-height:20px;width:41px;border-radius:3px 3px 0 0;font-size:11.5px;-webkit-text-stroke:.3px">Layers</div></div>
<div class="lbl" style="left:7px;top:567px;-webkit-text-stroke:.25px">Opacity:</div>
<div class="abs" style="left:68.5px;top:565px;width:52.5px;height:20px;background:#2d2d2d;border-radius:3px;font-size:11.500px;line-height:20.5px;padding-left:3px;color:#f0f0f0">100 %<span style="position:absolute;left:43px;top:0;font-size:7px;color:#ddd">&#9660;</span></div>
<div class="abs" style="left:124px;top:564.5px;width:80px;height:21px;background:#2d2d2d;border:1px solid #464646;border-radius:3px;font-size:11.500px;line-height:19.5px;padding-left:4px;color:#f0f0f0">Normal</div>
<div class="lrow" style="top:589.8px;background:#5b7fae;border-top-color:#5b7fae;"><div class="th"><div style="position:absolute;left:9px;top:0;width:31px;height:49px;background:#ec008c"></div></div><div class="nm" style="color:#bfcde3">(Rectangle)</div></div>
<div class="lrow" style="top:644.4px;"><div class="th"><svg width="49" height="49" viewBox="0 0 49 49" style="position:absolute;left:0;top:0"><text transform="matrix(.866 -.5 .866 .5 35.5 30.0)" font-family="Liberation Sans, sans-serif" font-weight="bold" font-size="39.3" fill="#fff" text-anchor="middle" stroke="#fff" stroke-width="2.6" stroke-linejoin="round">R</text></svg></div><div class="nm" style="">(Curves)</div></div>
<div class="lrow" style="top:699.0px;"><div class="th"><svg width="49" height="49" viewBox="0 0 49 49" style="position:absolute;left:0;top:0"><text transform="matrix(.866 -.5 .866 .5 36.0 32.0)" font-family="Liberation Sans, sans-serif" font-weight="bold" font-size="40.7" fill="#fff" text-anchor="middle" stroke="#fff" stroke-width="2.6" stroke-linejoin="round">E</text></svg></div><div class="nm" style="">(Curve)</div></div>
<div class="lrow" style="top:753.6px;"><div class="th"><svg width="49" height="49" viewBox="0 0 49 49" style="position:absolute;left:0;top:0"><text transform="matrix(.866 -.5 .866 .5 35.5 31.0)" font-family="Liberation Sans, sans-serif" font-weight="bold" font-size="36.4" fill="#fff" text-anchor="middle" stroke="#fff" stroke-width="2.6" stroke-linejoin="round">M</text></svg></div><div class="nm" style="">(Curve)</div></div>
<div class="lrow" style="top:808.2px;"><div class="th"><svg width="49" height="49" viewBox="0 0 49 49" style="position:absolute;left:0;top:0"><text transform="matrix(.866 -.5 .866 .5 35.5 31.0)" font-family="Liberation Sans, sans-serif" font-weight="bold" font-size="36.4" fill="#fff" text-anchor="middle" stroke="#fff" stroke-width="2.6" stroke-linejoin="round">M</text></svg></div><div class="nm" style="">(Curve)</div></div>
<div class="lrow" style="top:862.8px;"><div class="th"><svg width="49" height="49" viewBox="0 0 49 49" style="position:absolute;left:0;top:0"><text transform="matrix(.866 -.5 .866 .5 39.0 33.0)" font-family="Liberation Sans, sans-serif" font-weight="bold" font-size="40.3" fill="#fff" text-anchor="middle" stroke="#fff" stroke-width="2.6" stroke-linejoin="round">U</text></svg></div><div class="nm" style="">(Curve)</div></div>
<div class="lrow" style="top:917.4px;"><div class="th"><svg width="49" height="49" viewBox="0 0 49 49" style="position:absolute;left:0;top:0"><text transform="matrix(.866 -.5 .866 .5 36.5 31.0)" font-family="Liberation Sans, sans-serif" font-weight="bold" font-size="40.3" fill="#fff" text-anchor="middle" stroke="#fff" stroke-width="2.6" stroke-linejoin="round">S</text></svg></div><div class="nm" style="">(Curve)</div></div>
<div class="lrow" style="top:972.0px;"><div class="th"></div><div class="nm" style="">(Curve)</div></div>

<div class="abs" style="left:0;top:978.500px;width:190px;height:14px;background:#3c3c3c;border-top:1px solid #2c2c2c"></div>
<svg class="abs" style="left:0;top:978px" width="190" height="14" viewBox="1090 1066 190 14">
<path d="M1098.500 1072.500L1108 1076.500L1117.500 1072.500M1098.500 1076.500L1108 1080.500L1117.500 1076.500" fill="none" stroke="#cfcfcf" stroke-width="2.200"/>
<rect x="1183.500" y="1072" width="15" height="10" fill="#cfcfcf"/><circle cx="1191" cy="1078.500" r="4.500" fill="#444"/>
<circle cx="1215" cy="1079" r="7" fill="#cfcfcf"/><path d="M1215 1072a7 7 0 0 1 0 14Z" fill="#555"/>
<text x="1234" y="1081" font-size="12" font-style="italic" fill="#cfcfcf" font-family="Liberation Serif, serif">fx</text>
</svg>

</div>
<svg class="abs" style="left:0;top:0" width="1280" height="1080" viewBox="0 0 1280 1080">
<!-- small tooltip -->
<rect x="1004.500" y="50.500" width="61" height="19.500" fill="#383838" stroke="#4b4b4b" stroke-width="1"/>
<text x="1008.8" y="65.3" font-size="12.8" fill="#f4f4f4" font-family="Liberation Sans, sans-serif" letter-spacing=".15" stroke="#f4f4f4" stroke-width=".25">Subtract</text>
<!-- arrow -->
<path d="M1001.1 47.3L1029.2 103.9L1010 103.9L1010 165L991.8 165L991.8 103.9L972.6 103.9Z" fill="#05abee"/>
<!-- frame -->
<rect x="790.1" y="158.6" width="423.9" height="144.2" fill="#05abee"/>
<rect x="802.3" y="171.9" width="399.3" height="118.3" fill="#333333"/>
<rect x="826" y="183" width="357.500" height="44.300" rx="8" fill="#474747"/>
<g stroke="#3a3a3a" stroke-width="1.500"><path d="M900.4 183V227.300M970.9 183V227.300M1041 183V227.300M1111.6 183V227.300"/></g>
<!-- bool icons -->
<rect x="849.7" y="189.1" width="22.2" height="21.9" fill="#cfcfcf"/><circle cx="872.5000000000001" cy="211.8" r="10.5" fill="#d9d9d9"/><path d="M867.6 211.8H877.4M872.5000000000001 206.9V216.7" stroke="#1c1c1c" stroke-width="1.7"/><rect x="919.9" y="189.1" width="22.2" height="21.9" fill="#cfcfcf"/><circle cx="942.7" cy="211.8" r="12.2" fill="#484848"/><circle cx="942.7" cy="211.8" r="10.1" fill="#9e9e9e"/><path d="M937.8 211.8H947.6" stroke="#2c2c2c" stroke-width="1.7"/><rect x="989.8" y="189.1" width="22.2" height="21.9" fill="#a2a2a2"/><circle cx="1012.6" cy="211.8" r="10.5" fill="#a2a2a2"/><path d="M1002.1 211.8A10.5 10.5 0 0 1 1012.6 201.3V211.8Z" fill="#d9d9d9" stroke="#484848" stroke-width="1.4" stroke-linejoin="miter"/><rect x="1060" y="189.1" width="22.2" height="21.9" fill="#cfcfcf"/><circle cx="1082.8" cy="211.8" r="10.5" fill="#d9d9d9"/><path d="M1072.3 211.8A10.5 10.5 0 0 1 1082.8 201.3V211.8Z" fill="#a2a2a2" stroke="#484848" stroke-width="1.4" stroke-linejoin="miter"/><rect x="1129.8" y="189.1" width="22.2" height="21.9" fill="#cfcfcf"/><circle cx="1152.6" cy="211.8" r="10.5" fill="#d9d9d9"/><path d="M1142.1 211.8A10.5 10.5 0 0 1 1152.6 201.3V211.8Z" fill="#d9d9d9" stroke="#484848" stroke-width="1.4" stroke-linejoin="miter"/>
<!-- big tooltip -->
<rect x="934.500" y="245.300" width="113.700" height="37.700" rx=".5" fill="#2f2d2c" stroke="#636363" stroke-width="1"/>
<text x="945.2" y="271.2" font-size="24" fill="#f6f6f6" font-family="Liberation Sans, sans-serif" stroke="#f6f6f6" stroke-width=".75">Subtract</text>
<!-- cursor -->
<path d="M1001.500 28.500L1001.500 43.500L1005 40.300L1007.600 46.300L1010 45.200L1007.400 39.400L1012.200 39.200Z" fill="#111" stroke="#fff" stroke-width="1.300" stroke-linejoin="round"/>
</svg>

</body></html>
